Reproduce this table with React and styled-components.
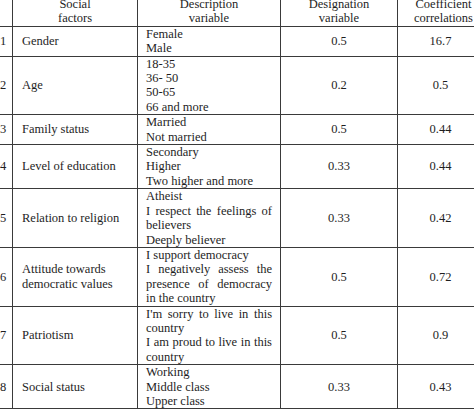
import React from "react";
import styled, { createGlobalStyle } from "styled-components";

const Global = createGlobalStyle`
  html, body {
    margin: 0;
    padding: 0;
    background: #ffffff;
    overflow: hidden;
  }
  body {
    font-family: "Liberation Serif", "Times New Roman", serif;
    color: #1e1e1e;
  }
`;

const Table = styled.div`
  display: grid;
  grid-template-columns: 19px 125px 143px 117px 86px;
  width: 490px;
  margin: -3px 0 0 -6px;
  font-size: 12.5px;
  line-height: 14.4px;
`;

const Cell = styled.div`
  box-sizing: border-box;
  display: flex;
  flex-direction: column;
  justify-content: center;
  border-right: 1px solid #3a3a3a;
  border-bottom: 1px solid #3a3a3a;
  text-align: ${(p) => p.$align || "left"};
  padding: ${(p) => p.$pad || "0"};
`;

const HeadCell = styled(Cell)`
  text-align: center;
  justify-content: flex-end;
`;

const Item = styled.div`
  text-align: justify;
`;

const rows = [
  { n: "1", f: "Gender", d: ["Female", "Male"], v: "0.5", c: "16.7" },
  { n: "2", f: "Age", d: ["18-35", "36- 50", "50-65", "66 and more"], v: "0.2", c: "0.5" },
  { n: "3", f: "Family status", d: ["Married", "Not married"], v: "0.5", c: "0.44" },
  { n: "4", f: "Level of education", d: ["Secondary", "Higher", "Two higher and more"], v: "0.33", c: "0.44" },
  {
    n: "5",
    f: "Relation to religion",
    d: ["Atheist", "I respect the feelings of believers", "Deeply believer"],
    v: "0.33",
    c: "0.42",
  },
  {
    n: "6",
    f: "Attitude towards democratic values",
    d: ["I support democracy", "I negatively assess the presence of democracy in the country"],
    v: "0.5",
    c: "0.72",
  },
  {
    n: "7",
    f: "Patriotism",
    d: ["I'm sorry to live in this country", "I am proud to live in this country"],
    v: "0.5",
    c: "0.9",
  },
  { n: "8", f: "Social status", d: ["Working", "Middle class", "Upper class"], v: "0.33", c: "0.43" },
];

export default function App() {
  return (
    <>
      <Global />
      <Table>
        <HeadCell />
        <HeadCell>
          <div>Social</div>
          <div>factors</div>
        </HeadCell>
        <HeadCell>
          <div>Description</div>
          <div>variable</div>
        </HeadCell>
        <HeadCell>
          <div>Designation</div>
          <div>variable</div>
        </HeadCell>
        <HeadCell $pad="0 0 0 6px">
          <div>Coefficient</div>
          <div>correlations</div>
        </HeadCell>
        {rows.map((r) => (
          <React.Fragment key={r.n}>
            <Cell $align="center">{r.n}</Cell>
            <Cell $pad="0 4px 0 9px">{r.f}</Cell>
            <Cell $pad="0 8px 0 8px">
              {r.d.map((t) => (
                <Item key={t}>{t}</Item>
              ))}
            </Cell>
            <Cell $align="center">{r.v}</Cell>
            <Cell $align="center">{r.c}</Cell>
          </React.Fragment>
        ))}
      </Table>
    </>
  );
}
